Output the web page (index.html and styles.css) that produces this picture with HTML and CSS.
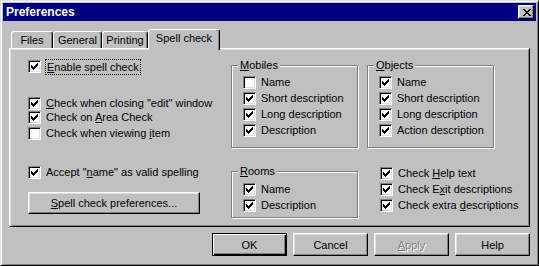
FILE: index.html
```html
<!DOCTYPE html>
<html>
<head>
    <title>Preferences</title>
    <link rel="stylesheet" href="styles.css">
</head>
<body>
    <svg class="defs">
        <symbol id="tick" viewBox="0 0 7 7">
            <path d="M6 0h1v1h-1z M5 1h2v1h-2z M0 2h1v1h-1z M4 2h3v1h-3z M0 3h2v1h-2z M3 3h3v1h-3z M0 4h5v1h-5z M1 5h3v1h-3z M2 6h1v1h-1z"/>
        </symbol>
    </svg>
    <div class="window">
        <div class="titlebar">
            <span class="title">Preferences</span>
            <div class="close-btn">
                <svg width="8" height="7" viewBox="0 0 8 7" shape-rendering="crispEdges">
                    <path d="M0 0h2v1h-2z M6 0h2v1h-2z M1 1h2v1h-2z M5 1h2v1h-2z M2 2h4v1h-4z M3 3h2v1h-2z M2 4h4v1h-4z M1 5h2v1h-2z M5 5h2v1h-2z M0 6h2v1h-2z M6 6h2v1h-2z"/>
                </svg>
            </div>
        </div>

        <div class="tabs">
            <div class="tab tab-files">Files</div>
            <div class="tab tab-general">General</div>
            <div class="tab tab-printing">Printing</div>
            <div class="tab tab-spell active">Spell check</div>
        </div>

        <div class="panel">
            <div class="panel-row">
                <div class="col-left">
                    <div class="check">
                        <span class="box"><svg><use href="#tick"/></svg></span>
                        <span class="label focus"><u>E</u>nable spell check</span>
                    </div>
                    <div class="check spaced">
                        <span class="box"><svg><use href="#tick"/></svg></span>
                        <span class="label"><u>C</u>heck when closing &quot;edit&quot; window</span>
                    </div>
                    <div class="check tight">
                        <span class="box"><svg><use href="#tick"/></svg></span>
                        <span class="label">Check on <u>A</u>rea Check</span>
                    </div>
                    <div class="check">
                        <span class="box"></span>
                        <span class="label">Check when viewing <u>i</u>tem</span>
                    </div>
                </div>

                <fieldset class="group">
                    <legend><u>M</u>obiles</legend>
                    <div class="check">
                        <span class="box"></span>
                        <span class="label">Name</span>
                    </div>
                    <div class="check">
                        <span class="box"><svg><use href="#tick"/></svg></span>
                        <span class="label">Short description</span>
                    </div>
                    <div class="check">
                        <span class="box"><svg><use href="#tick"/></svg></span>
                        <span class="label">Long description</span>
                    </div>
                    <div class="check">
                        <span class="box"><svg><use href="#tick"/></svg></span>
                        <span class="label">Description</span>
                    </div>
                </fieldset>

                <fieldset class="group">
                    <legend><u>O</u>bjects</legend>
                    <div class="check">
                        <span class="box"><svg><use href="#tick"/></svg></span>
                        <span class="label">Name</span>
                    </div>
                    <div class="check">
                        <span class="box"><svg><use href="#tick"/></svg></span>
                        <span class="label">Short description</span>
                    </div>
                    <div class="check">
                        <span class="box"><svg><use href="#tick"/></svg></span>
                        <span class="label">Long description</span>
                    </div>
                    <div class="check">
                        <span class="box"><svg><use href="#tick"/></svg></span>
                        <span class="label">Action description</span>
                    </div>
                </fieldset>
            </div>

            <div class="panel-row bottom">
                <div class="col-left">
                    <div class="check">
                        <span class="box"><svg><use href="#tick"/></svg></span>
                        <span class="label">Accept &quot;<u>n</u>ame&quot; as valid spelling</span>
                    </div>
                    <button class="btn prefs-btn"><u>S</u>pell check preferences...</button>
                </div>

                <fieldset class="group rooms">
                    <legend><u>R</u>ooms</legend>
                    <div class="check">
                        <span class="box"><svg><use href="#tick"/></svg></span>
                        <span class="label">Name</span>
                    </div>
                    <div class="check">
                        <span class="box"><svg><use href="#tick"/></svg></span>
                        <span class="label">Description</span>
                    </div>
                </fieldset>

                <div class="extra-list">
                    <div class="check">
                        <span class="box"><svg><use href="#tick"/></svg></span>
                        <span class="label">Check <u>H</u>elp text</span>
                    </div>
                    <div class="check">
                        <span class="box"><svg><use href="#tick"/></svg></span>
                        <span class="label">Check E<u>x</u>it descriptions</span>
                    </div>
                    <div class="check">
                        <span class="box"><svg><use href="#tick"/></svg></span>
                        <span class="label">Check extra <u>d</u>escriptions</span>
                    </div>
                </div>
            </div>
        </div>

        <div class="buttons">
            <button class="btn default">OK</button>
            <button class="btn">Cancel</button>
            <button class="btn disabled"><u>A</u>pply</button>
            <button class="btn">Help</button>
        </div>
    </div>
</body>
</html>
```

FILE: styles.css
```css
body {
    margin: 0;
    font-family: "Liberation Sans", Arial, sans-serif;
    font-size: 11px;
    color: #000;
}
.defs {
    display: none;
}
.window {
    width: 539px;
    height: 266px;
    box-sizing: border-box;
    background: #c0c0c0;
    border: 1px solid;
    border-color: #dfdfdf #000 #000 #dfdfdf;
    box-shadow: inset 1px 1px #fff, inset -1px -1px #808080;
    padding: 2px;
    display: flex;
    flex-direction: column;
}
.titlebar {
    height: 18px;
    flex-shrink: 0;
    background: #000080;
    display: flex;
    align-items: center;
    padding: 0 2px 0 3px;
}
.title {
    color: #fff;
    font-weight: bold;
    font-size: 12px;
}
.close-btn {
    margin-left: auto;
    width: 16px;
    height: 14px;
    box-sizing: border-box;
    background: #c0c0c0;
    border: 1px solid;
    border-color: #fff #000 #000 #fff;
    box-shadow: inset -1px -1px #808080, inset 1px 1px #dfdfdf;
    display: flex;
    align-items: center;
    justify-content: center;
    padding-left: 1px;
}

/* tabs */
.tabs {
    display: flex;
    align-items: flex-end;
    height: 19px;
    flex-shrink: 0;
    margin: 8px 6px 0;
    padding-left: 2px;
}
.tab {
    height: 17px;
    box-sizing: border-box;
    padding-top: 1px;
    line-height: 15px;
    text-align: center;
    border: 1px solid;
    border-bottom: none;
    border-color: #fff #000 transparent #fff;
    border-radius: 3px 3px 0 0;
    box-shadow: inset -1px 0 #808080;
}
.tab-files { width: 42px; }
.tab-general { width: 49px; }
.tab-printing { width: 46px; }
.tab-spell { width: 72px; }
.tab.active {
    height: 21px;
    margin-bottom: -2px;
    position: relative;
    z-index: 1;
    background: #c0c0c0;
}

/* tab page */
.panel {
    height: 179px;
    flex-shrink: 0;
    box-sizing: border-box;
    margin: 0 6px;
    border: 1px solid;
    border-color: #fff #000 #000 #fff;
    box-shadow: inset 1px 1px #dfdfdf, inset -1px -1px #808080;
    padding: 9px 0 0 18px;
}
.panel-row {
    display: flex;
    align-items: flex-start;
}
.panel-row.bottom {
    margin-top: 16px;
}
.col-left {
    width: 203px;
    flex-shrink: 0;
}
.check {
    display: flex;
    align-items: flex-start;
    height: 16px;
    white-space: nowrap;
}
.check.spaced {
    margin-top: 21px;
}
.check.tight {
    margin-top: -2px;
}
.box {
    width: 13px;
    height: 13px;
    margin-top: 2px;
    box-sizing: border-box;
    flex-shrink: 0;
    background: #fff;
    border: 1px solid;
    border-color: #808080 #fff #fff #808080;
    box-shadow: inset 1px 1px #000, inset -1px -1px #dfdfdf;
    display: flex;
    align-items: center;
    justify-content: center;
}
.box svg {
    width: 7px;
    height: 7px;
    shape-rendering: crispEdges;
}
.label {
    line-height: 16px;
    margin-left: 5px;
}
.label.focus {
    margin-left: 4px;
    margin-top: 1px;
    line-height: 14px;
    padding: 0 1px;
    border: 1px dotted #000;
}

.group {
    width: 127px;
    box-sizing: border-box;
    flex-shrink: 0;
    margin: 1px 9px 0 0;
    padding: 2px 0 9px 6px;
    border: 1px solid #808080;
    box-shadow: inset 1px 1px #fff, 1px 1px #fff;
    min-width: 0;
}
.group legend {
    padding: 0 2px;
    line-height: 13px;
    background: #c0c0c0;
}
.group .check {
    margin-left: 5px;
}
.group.rooms {
    padding: 3px 0 4px 6px;
}
.extra-list {
    margin-top: 1px;
    padding-left: 13px;
}

/* push buttons */
.btn {
    width: 75px;
    height: 23px;
    padding: 0;
    font: inherit;
    color: #000;
    background: #c0c0c0;
    border: 1px solid;
    border-color: #fff #000 #000 #fff;
    box-shadow: inset -1px -1px #808080, inset 1px 1px #dfdfdf;
}
.btn.default {
    border-color: #000;
    box-shadow: inset 1px 1px #fff, inset -1px -1px #000, inset -2px -2px #808080;
}
.btn.disabled {
    color: #808080;
    text-shadow: 1px 1px #fff;
}
.prefs-btn {
    width: 172px;
    height: 22px;
    margin-top: 12px;
}
.buttons {
    display: flex;
    justify-content: flex-end;
    gap: 6px;
    margin: 6px 6px 0;
}
```
